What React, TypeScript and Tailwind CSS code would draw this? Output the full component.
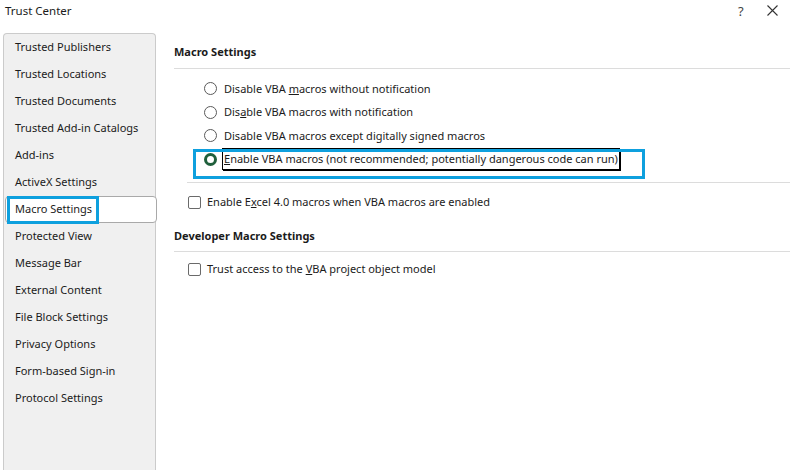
import React from "react";

const NAV = [
  "Trusted Publishers",
  "Trusted Locations",
  "Trusted Documents",
  "Trusted Add-in Catalogs",
  "Add-ins",
  "ActiveX Settings",
  "Macro Settings",
  "Protected View",
  "Message Bar",
  "External Content",
  "File Block Settings",
  "Privacy Options",
  "Form-based Sign-in",
  "Protocol Settings",
];

function Radio({ checked }: { checked?: boolean }) {
  if (checked) {
    return (
      <span className="w-[13px] h-[13px] rounded-full border-[3px] border-[#1f5f3b] bg-white shrink-0" />
    );
  }
  return <span className="w-[13px] h-[13px] rounded-full border border-[#5a5a5a] bg-white shrink-0" />;
}

function Check() {
  return <span className="w-[13px] h-[13px] rounded-[2px] border border-[#6a6a6a] bg-white shrink-0" />;
}

export default function App() {
  return (
    <div
      className="w-[800px] h-[470px] bg-white text-[#1b1b1b] text-[11px] overflow-hidden flex flex-col"
      style={{ fontFamily: '"Noto Sans", "Open Sans", sans-serif' }}
    >
      {/* title bar */}
      <div className="h-[22px] flex items-center pl-[5px] relative">
        <span className="text-[11.5px]">Trust Center</span>
        <span className="absolute left-[738px] top-[2px] text-[13px] text-[#444]">?</span>
        <svg className="absolute left-[767px] top-[5px]" width="11" height="11" viewBox="0 0 11 11">
          <path d="M0.5 0.5L10.5 10.5M10.5 0.5L0.5 10.5" stroke="#333" strokeWidth="1.1" />
        </svg>
      </div>

      <div className="flex flex-1 pt-[11px]">
        {/* sidebar */}
        <div className="ml-[3px] w-[153px] bg-[#f0f0f0] border border-b-0 border-[#cbcbcb] rounded-t-[4px]">
          {NAV.map((n) => {
            const sel = n === "Macro Settings";
            return (
              <div
                key={n}
                className={`relative h-[27px] flex items-center whitespace-nowrap ${
                  sel ? "bg-white border border-[#a9a9a9] rounded-[4px] ml-[1px] -mr-[2px] pl-[9px]" : "pl-[11px]"
                }`}
              >
                {n}
                {sel && (
                  <span className="absolute left-[1px] -top-[1px] w-[92px] h-[28px] border-[3px] border-[#0ea0de]" />
                )}
              </div>
            );
          })}
        </div>

        {/* content */}
        <div className="flex-1 pl-[18px] pr-[10px] pt-[11px]">
          <div className="font-bold leading-[16px] pb-[8px] border-b border-[#dcdcdc]">Macro Settings</div>
          <div className="pl-[30px] pt-[8px] flex flex-col">
            <div className="h-[23.5px] flex items-center gap-[7px]">
              <Radio />
              <span>
                Disable VBA <u>m</u>acros without notification
              </span>
            </div>
            <div className="h-[23.5px] flex items-center gap-[7px]">
              <Radio />
              <span>
                Dis<u>a</u>ble VBA macros with notification
              </span>
            </div>
            <div className="h-[23.5px] flex items-center gap-[7px]">
              <Radio />
              <span>Disable VBA macros except digitally signed macros</span>
            </div>
            <div className="relative h-[23.5px] flex items-center gap-[5px]">
              <Radio checked />
              <span className="border border-black shadow-[1px_1px_0_#000] px-[1px] leading-[20px]">
                <u>E</u>nable VBA macros (not recommended; potentially dangerous code can run)
              </span>
              <span className="absolute -left-[11px] top-[1px] w-[452px] h-[30px] border-[3px] border-[#0ea0de]" />
            </div>
          </div>
          <div className="ml-[13px] mt-[11px] border-t border-[#dcdcdc]" />
          <div className="flex items-center gap-[6px] pl-[14px] h-[28px] mt-[5px]">
            <Check />
            <span>
              Enable E<u>x</u>cel 4.0 macros when VBA macros are enabled
            </span>
          </div>
          <div className="font-bold leading-[16px] pt-[12px] pb-[7px] border-b border-[#dcdcdc]">
            Developer Macro Settings
          </div>
          <div className="flex items-center gap-[6px] pl-[14px] h-[28px] mt-[3px]">
            <Check />
            <span>
              Trust access to the <u>V</u>BA project object model
            </span>
          </div>
        </div>
      </div>
    </div>
  );
}
